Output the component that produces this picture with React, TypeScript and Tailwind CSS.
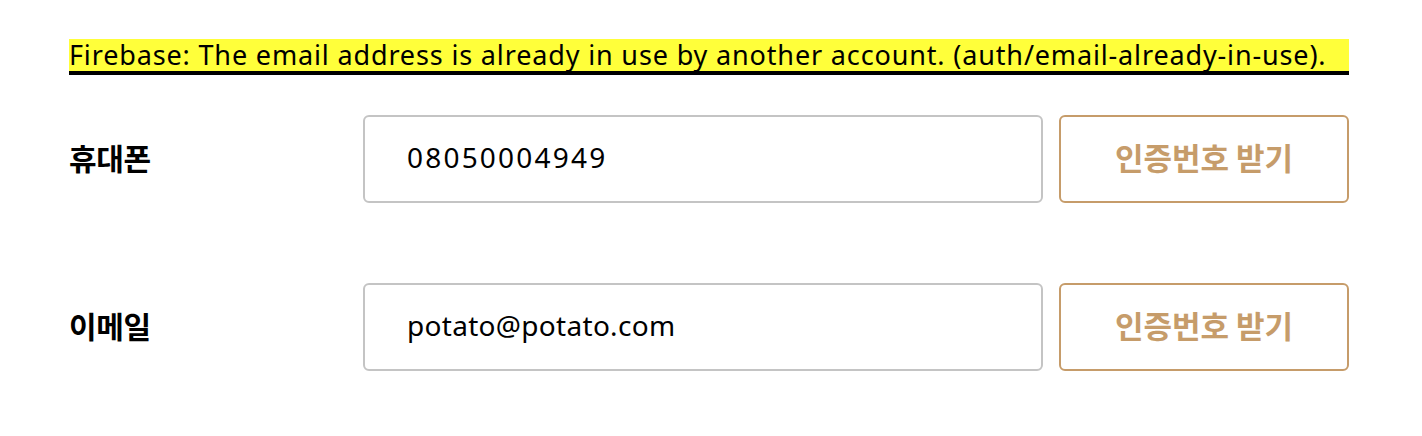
import React from "react";

const font = { fontFamily: '"Noto Sans", "Noto Sans CJK KR", sans-serif' };

function Row({ label, value, track }: { label: string; value: string; track?: boolean }) {
  return (
    <div className="flex items-center">
      <div className="w-[294px] pb-[4px] text-[30px] font-bold leading-none tracking-[-0.3px] text-black" style={{ fontFamily: '"Noto Sans CJK KR", sans-serif' }}>
        {label}
      </div>
      <div
        className={`flex h-[88px] w-[680px] items-center rounded-[6px] border-2 border-[#c4c4c4] pb-[4px] pl-[42px] text-[28px] text-black ${track ? "tracking-[2.2px]" : "tracking-[0.3px]"}`}
      >
        {value}
      </div>
      <button
        className="ml-[16px] flex h-[88px] w-[290px] items-center justify-center rounded-[6px] border-2 border-[#c69c6a] pb-[4px] text-[31px] font-bold text-[#c69c6a]"
        style={{ fontFamily: '"Noto Sans CJK KR", sans-serif' }}
      >
        인증번호 받기
      </button>
    </div>
  );
}

export default function App() {
  return (
    <div className="min-h-[436px] bg-white pl-[69px] pt-[39px]" style={font}>
      <div className="h-[36px] w-[1280px] border-b-4 border-black bg-[#ffff3a] text-[27px] leading-[32px] tracking-[0.85px] text-black">
        Firebase: The email address is already in use by another account. (auth/email-already-in-use).
      </div>
      <div className="mt-[40px] flex flex-col gap-[80px]">
        <Row label="휴대폰" value="08050004949" track />
        <Row label="이메일" value="potato@potato.com" />
      </div>
    </div>
  );
}
